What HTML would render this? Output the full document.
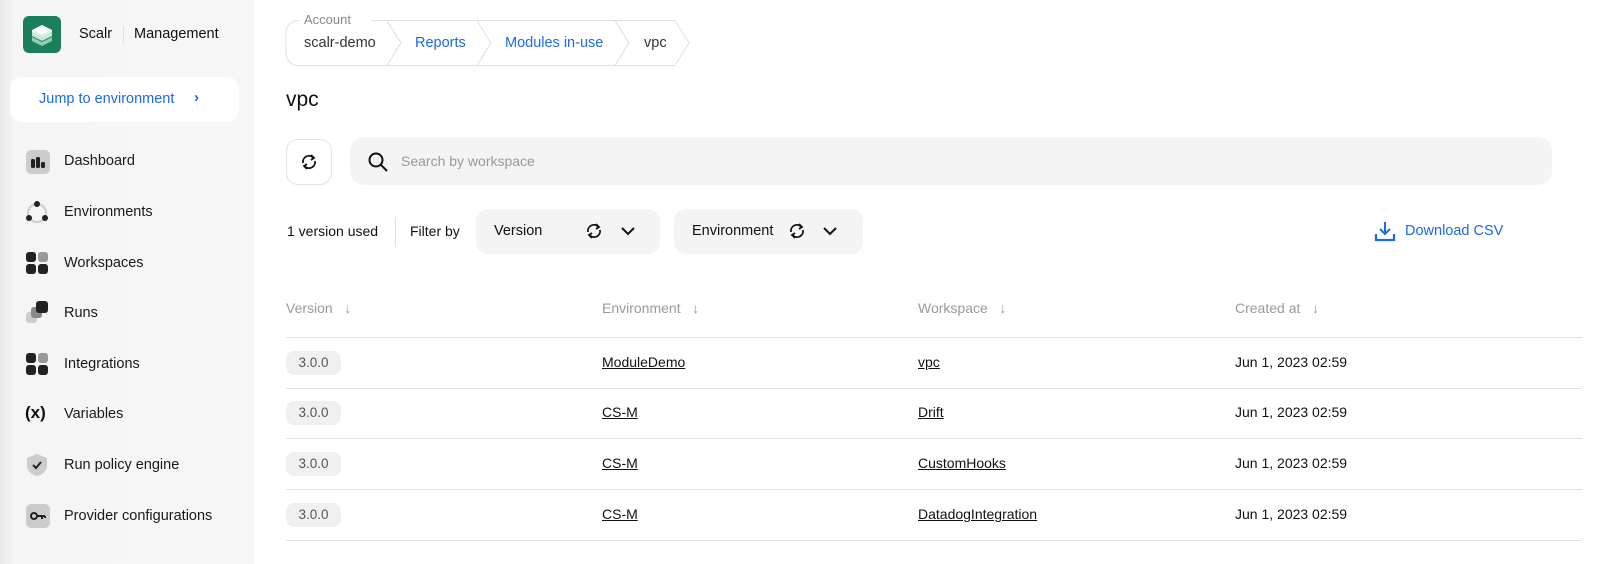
<!DOCTYPE html>
<html><head><style>
*{box-sizing:border-box;margin:0;padding:0}
body{width:1600px;height:564px;overflow:hidden;background:#fff;font-family:"Liberation Sans",sans-serif;color:#111;position:relative}
.sb{position:absolute;left:0;top:0;width:254px;height:564px;background:linear-gradient(90deg,#e9e9e9 0,#f5f5f5 14px,#f6f6f6 100%)}
.abs{position:absolute}
.nav{position:absolute;left:64px;font-size:14.5px;color:#1a1a1a}
.ic{position:absolute;left:25px;width:24px;height:24px}
.hd{position:absolute;top:300px;font-size:14px;color:#999}
.line{position:absolute;left:286px;width:1296px;height:1px;background:#e2e2e2}
.pill{position:absolute;left:286px;width:55px;height:24px;border-radius:8px;background:#f0f0f0;color:#555;font-size:13.5px;text-align:center;line-height:24px}
.cell{position:absolute;font-size:14px;color:#111}
.u{text-decoration:underline}
</style></head><body>
<div class="sb"></div>
<div class="abs" style="left:23px;top:16px;width:38px;height:37px;border-radius:6px;background:#1a7f5a"></div>
<svg class="abs" style="left:27px;top:20px" width="30" height="30" viewBox="0 0 30 30"><path d="M5 17 L15 22 L25 17 L25 21 L15 26 L5 21Z" fill="#8fcfb0"/><path d="M5 12 L15 17 L25 12 L25 16 L15 21 L5 16Z" fill="#c8ead9"/><path d="M5 10 L15 5 L25 10 L15 15Z" fill="#fff"/><path d="M5 10 L15 15 L25 10 L25 12 L15 17 L5 12Z" fill="#e8f6ee"/></svg>
<div class="abs" style="left:79px;top:26px;font-size:14.5px">Scalr</div>
<div class="abs" style="left:123px;top:26px;width:1px;height:17px;background:#ddd"></div>
<div class="abs" style="left:134px;top:26px;font-size:14.5px">Management</div>
<div class="abs" style="left:10px;top:77px;width:229px;height:45px;border-radius:12px;background:#fff"></div>
<div class="abs" style="left:39px;top:91px;font-size:14.5px;color:#1d6ae5">Jump to environment</div>
<div class="abs" style="left:194px;top:89px;font-size:15px;color:#1d6ae5;font-weight:bold">›</div>

<div class="abs" style="left:26px;top:150px;width:24px;height:24px;border-radius:5px;background:#ccc"></div>
<svg class="abs" style="left:26px;top:150px" width="24" height="24"><rect x="5" y="9" width="4" height="9" rx="1.5" fill="#222"/><rect x="10" y="7" width="4" height="11" rx="1.5" fill="#222"/><rect x="15" y="12" width="4" height="6" rx="1.5" fill="#222"/></svg>
<div class="nav" style="top:153px">Dashboard</div>
<svg class="abs" style="left:25px;top:200px" width="24" height="24"><circle cx="12" cy="13" r="9" fill="none" stroke="#ccc" stroke-width="2"/><circle cx="12" cy="4" r="3" fill="#222"/><circle cx="4" cy="18" r="3" fill="#222"/><circle cx="20" cy="18" r="3" fill="#222"/></svg>
<div class="nav" style="top:204px">Environments</div>
<svg class="abs" style="left:25px;top:251px" width="24" height="24"><rect x="1" y="1" width="10" height="10" rx="3" fill="#222"/><rect x="13" y="1" width="10" height="10" rx="3" fill="#999"/><rect x="1" y="13" width="10" height="10" rx="3" fill="#222"/><rect x="13" y="13" width="10" height="10" rx="3" fill="#222"/></svg>
<div class="nav" style="top:255px">Workspaces</div>
<svg class="abs" style="left:25px;top:301px" width="24" height="24"><rect x="1" y="11" width="11" height="11" rx="3" fill="#ccc"/><rect x="6" y="6" width="11" height="11" rx="3" fill="#888"/><rect x="11" y="0" width="12" height="12" rx="3" fill="#222"/></svg>
<div class="nav" style="top:305px">Runs</div>
<svg class="abs" style="left:25px;top:352px" width="24" height="24"><rect x="1" y="1" width="10" height="10" rx="3" fill="#222"/><rect x="13" y="1" width="10" height="10" rx="3" fill="#999"/><rect x="1" y="13" width="10" height="10" rx="3" fill="#222"/><rect x="13" y="13" width="10" height="10" rx="3" fill="#222"/></svg>
<div class="nav" style="top:356px">Integrations</div>
<div class="abs" style="left:25px;top:403px;font-size:17px;font-weight:bold">(x)</div>
<div class="nav" style="top:406px">Variables</div>
<svg class="abs" style="left:25px;top:453px" width="24" height="24"><path d="M12 1 L22 5 L22 13 C22 18 17 22 12 23 C7 22 2 18 2 13 L2 5Z" fill="#ccc"/><path d="M8 12 L11 15 L16 9" fill="none" stroke="#222" stroke-width="2"/></svg>
<div class="nav" style="top:457px">Run policy engine</div>
<div class="abs" style="left:26px;top:504px;width:24px;height:24px;border-radius:5px;background:#ccc"></div>
<svg class="abs" style="left:26px;top:504px" width="24" height="24"><circle cx="8" cy="12" r="3" fill="none" stroke="#222" stroke-width="2"/><path d="M11 12 H19 M16 12 V15 M19 12 V14" stroke="#222" stroke-width="2"/></svg>
<div class="nav" style="top:508px">Provider configurations</div>

<!-- breadcrumb -->
<svg class="abs" style="left:285px;top:10px" width="410" height="60"><g fill="#fff" stroke="#e0e0e0" stroke-width="1"><path d="M13 10.5 H102 L116 33 L102 55.5 H13 A12 12 0 0 1 1 43.5 V22.5 A12 12 0 0 1 13 10.5Z"/><path d="M102 10.5 H192 L206 33 L192 55.5 H102 L116 33Z"/><path d="M192 10.5 H330 L344 33 L330 55.5 H192 L206 33Z"/><path d="M330 10.5 H390 L404 33 L390 55.5 H330 L344 33Z"/></g><rect x="14" y="6" width="72" height="10" fill="#fff"/></svg>
<div class="abs" style="left:304px;top:12px;font-size:13px;color:#888">Account</div>
<div class="abs" style="left:304px;top:35px;font-size:14.5px;color:#333">scalr-demo</div>
<div class="abs" style="left:415px;top:35px;font-size:14.5px;color:#1d6ae5">Reports</div>
<div class="abs" style="left:505px;top:35px;font-size:14.5px;color:#1d6ae5">Modules in-use</div>
<div class="abs" style="left:644px;top:35px;font-size:14.5px;color:#333">vpc</div>
<div class="abs" style="left:286px;top:88px;font-size:21px;color:#111">vpc</div>

<div class="abs" style="left:286px;top:139px;width:46px;height:46px;border:1px solid #e2e2e2;border-radius:12px"></div>
<svg class="abs" style="left:299px;top:152px" width="20" height="20" viewBox="0 0 20 20"><path d="M4 11 A6 6 0 0 1 14 5.5 M16 9 A6 6 0 0 1 6 14.5" fill="none" stroke="#111" stroke-width="1.8"/><path d="M12 3 L15 6 L12 8" fill="none" stroke="#111" stroke-width="1.8"/><path d="M8 12 L5 14 L8 17" fill="none" stroke="#111" stroke-width="1.8"/></svg>
<div class="abs" style="left:350px;top:137px;width:1202px;height:48px;border-radius:14px;background:#f4f4f4"></div>
<svg class="abs" style="left:367px;top:151px" width="22" height="22"><circle cx="9" cy="9" r="6.5" fill="none" stroke="#111" stroke-width="2"/><path d="M14 14 L20 20" stroke="#111" stroke-width="2"/></svg>
<div class="abs" style="left:401px;top:153px;font-size:14px;color:#999">Search by workspace</div>

<div class="abs" style="left:287px;top:223px;font-size:14px">1 version used</div>
<div class="abs" style="left:395px;top:218px;width:1px;height:28px;background:#ddd"></div>
<div class="abs" style="left:410px;top:223px;font-size:14px">Filter by</div>
<div class="abs" style="left:476px;top:209px;width:184px;height:45px;border-radius:12px;background:#f4f4f4"></div>
<div class="abs" style="left:494px;top:223px;font-size:14.5px">Version</div>
<div class="abs" style="left:674px;top:209px;width:189px;height:45px;border-radius:12px;background:#f4f4f4"></div>
<div class="abs" style="left:692px;top:223px;font-size:14.5px">Environment</div>
<svg class="abs" style="left:584px;top:221px" width="20" height="20" viewBox="0 0 20 20"><path d="M4 11 A6 6 0 0 1 14 5.5 M16 9 A6 6 0 0 1 6 14.5" fill="none" stroke="#111" stroke-width="1.8"/><path d="M12 3 L15 6 L12 8" fill="none" stroke="#111" stroke-width="1.8"/><path d="M8 12 L5 14 L8 17" fill="none" stroke="#111" stroke-width="1.8"/></svg>
<svg class="abs" style="left:620px;top:225px" width="16" height="12"><path d="M2 3 L8 9 L14 3" fill="none" stroke="#111" stroke-width="2"/></svg>
<svg class="abs" style="left:787px;top:221px" width="20" height="20" viewBox="0 0 20 20"><path d="M4 11 A6 6 0 0 1 14 5.5 M16 9 A6 6 0 0 1 6 14.5" fill="none" stroke="#111" stroke-width="1.8"/><path d="M12 3 L15 6 L12 8" fill="none" stroke="#111" stroke-width="1.8"/><path d="M8 12 L5 14 L8 17" fill="none" stroke="#111" stroke-width="1.8"/></svg>
<svg class="abs" style="left:822px;top:225px" width="16" height="12"><path d="M2 3 L8 9 L14 3" fill="none" stroke="#111" stroke-width="2"/></svg>
<svg class="abs" style="left:1374px;top:220px" width="22" height="24"><path d="M11 2 V14 M6 9 L11 14 L16 9" fill="none" stroke="#1d6ae5" stroke-width="2"/><path d="M2 14 V20 H20 V14" fill="none" stroke="#1d6ae5" stroke-width="2.2"/></svg>
<div class="abs" style="left:1405px;top:223px;font-size:14.5px;color:#1d6ae5">Download CSV</div>

<div class="hd" style="left:286px">Version &nbsp; ↓</div>
<div class="hd" style="left:602px">Environment &nbsp; ↓</div>
<div class="hd" style="left:918px">Workspace &nbsp; ↓</div>
<div class="hd" style="left:1235px">Created at &nbsp; ↓</div>
<div class="line" style="top:337px"></div>
<div class="line" style="top:388px"></div>
<div class="line" style="top:438px"></div>
<div class="line" style="top:489px"></div>
<div class="line" style="top:540px"></div>

<div class="pill" style="top:351px">3.0.0</div>
<div class="pill" style="top:401px">3.0.0</div>
<div class="pill" style="top:452px">3.0.0</div>
<div class="pill" style="top:503px">3.0.0</div>
<div class="cell u" style="left:602px;top:354px">ModuleDemo</div>
<div class="cell u" style="left:602px;top:404px">CS-M</div>
<div class="cell u" style="left:602px;top:455px">CS-M</div>
<div class="cell u" style="left:602px;top:506px">CS-M</div>
<div class="cell u" style="left:918px;top:354px">vpc</div>
<div class="cell u" style="left:918px;top:404px">Drift</div>
<div class="cell u" style="left:918px;top:455px">CustomHooks</div>
<div class="cell u" style="left:918px;top:506px">DatadogIntegration</div>
<div class="cell" style="left:1235px;top:354px">Jun 1, 2023 02:59</div>
<div class="cell" style="left:1235px;top:404px">Jun 1, 2023 02:59</div>
<div class="cell" style="left:1235px;top:455px">Jun 1, 2023 02:59</div>
<div class="cell" style="left:1235px;top:506px">Jun 1, 2023 02:59</div>
</body></html>
